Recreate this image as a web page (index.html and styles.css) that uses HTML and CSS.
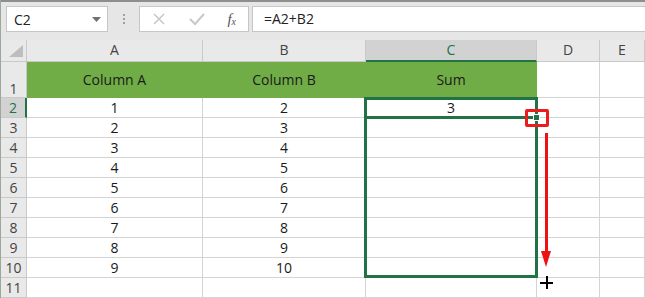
FILE: index.html
```html
<!DOCTYPE html>
<html>
<head>
    <title>Fill Handle</title>
    <link rel="stylesheet" href="styles.css">
</head>
<body>
    <div class="toolbar">
        <div class="namebox">
            <span>C2</span>
            <svg class="dropdown" width="9" height="5" viewBox="0 0 9 5"><path d="M0 0 H9 L4.5 5 Z" fill="#707070"/></svg>
        </div>
        <div class="grip"><i></i><i></i><i></i></div>
        <div class="fbuttons">
            <svg width="14" height="14" viewBox="0 0 14 14"><path d="M2 2 L12 12 M12 2 L2 12" stroke="#c8c8c8" stroke-width="1.6"/></svg>
            <svg width="16" height="14" viewBox="0 0 16 14"><path d="M1 7 L6 12 L15 2" stroke="#c8c8c8" stroke-width="2" fill="none"/></svg>
            <span class="fx">f<sub>x</sub></span>
        </div>
        <div class="formula">=A2+B2</div>
    </div>

    <div class="sheet">
        <div class="corner"><svg width="14" height="12" viewBox="0 0 14 12"><path d="M14 0 V12 H0 Z" fill="#bdbdbd"/></svg></div>
        <div class="colhead">A</div>
        <div class="colhead">B</div>
        <div class="colhead sel">C</div>
        <div class="colhead">D</div>
        <div class="colhead">E</div>

        <div class="rowhead tall">1</div>
        <div class="cell title">Column A</div>
        <div class="cell title">Column B</div>
        <div class="cell title last">Sum</div>
        <div class="cell"></div>
        <div class="cell"></div>

        <div class="rowhead sel">2</div><div class="cell">1</div><div class="cell">2</div><div class="cell">3</div><div class="cell"></div><div class="cell"></div>
        <div class="rowhead">3</div><div class="cell">2</div><div class="cell">3</div><div class="cell"></div><div class="cell"></div><div class="cell"></div>
        <div class="rowhead">4</div><div class="cell">3</div><div class="cell">4</div><div class="cell"></div><div class="cell"></div><div class="cell"></div>
        <div class="rowhead">5</div><div class="cell">4</div><div class="cell">5</div><div class="cell"></div><div class="cell"></div><div class="cell"></div>
        <div class="rowhead">6</div><div class="cell">5</div><div class="cell">6</div><div class="cell"></div><div class="cell"></div><div class="cell"></div>
        <div class="rowhead">7</div><div class="cell">6</div><div class="cell">7</div><div class="cell"></div><div class="cell"></div><div class="cell"></div>
        <div class="rowhead">8</div><div class="cell">7</div><div class="cell">8</div><div class="cell"></div><div class="cell"></div><div class="cell"></div>
        <div class="rowhead">9</div><div class="cell">8</div><div class="cell">9</div><div class="cell"></div><div class="cell"></div><div class="cell"></div>
        <div class="rowhead">10</div><div class="cell">9</div><div class="cell">10</div><div class="cell"></div><div class="cell"></div><div class="cell"></div>
        <div class="rowhead">11</div><div class="cell"></div><div class="cell"></div><div class="cell"></div><div class="cell"></div><div class="cell"></div>

        <!-- selection and annotation overlays -->
        <div class="selection"></div>
        <div class="activeline"></div>
        <div class="handle"></div>
        <div class="redbox"></div>
        <div class="arrow"></div>
        <div class="plus"></div>
    </div>
</body>
</html>
```

FILE: styles.css
```css
* {
    margin: 0;
    padding: 0;
    box-sizing: border-box;
}
body {
    width: 645px;
    height: 298px;
    overflow: hidden;
    font-family: "Open Sans", "Noto Sans", sans-serif;
    background: #fff;
    border-left: 1px solid #9aa89e;
}
.toolbar {
    height: 40px;
    background: #e6e6e6;
    border-top: 2px solid #8e8e8e;
    display: flex;
    align-items: flex-start;
    padding-top: 4px;
    padding-left: 5px;
}
.namebox {
    width: 102px;
    height: 26px;
    background: #fff;
    border: 1px solid #c6c6c6;
    display: flex;
    align-items: center;
    justify-content: space-between;
    padding: 0 6px 0 7px;
    font-size: 14px;
    color: #222;
}
.grip {
    width: 31px;
    height: 26px;
    display: flex;
    flex-direction: column;
    align-items: center;
    justify-content: center;
    gap: 2px;
}
.grip i {
    width: 2px;
    height: 2px;
    background: #a0a0a0;
}
.fbuttons {
    width: 110px;
    height: 26px;
    background: #fff;
    border: 1px solid #c6c6c6;
    display: flex;
    align-items: center;
    justify-content: space-between;
    padding: 0 12px 0 12px;
}
.fx {
    font-family: "Liberation Serif", serif;
    font-style: italic;
    font-size: 15px;
    color: #555;
    line-height: 1;
}
.fx sub {
    font-size: 10px;
    vertical-align: -1px;
}
.formula {
    flex: 1;
    height: 26px;
    margin-left: 3px;
    background: #fff;
    border: 1px solid #c6c6c6;
    border-right: none;
    font-size: 14px;
    color: #222;
    padding-left: 11px;
    line-height: 24px;
}
.sheet {
    position: relative;
    display: grid;
    grid-template-columns: 26px 176px 163px 171px 63px 1fr;
    grid-template-rows: 22px 36px repeat(10, 20px);
    font-size: 14px;
    color: #1a1a1a;
    border-bottom: 2px solid #9d9d9d;
}
.corner,
.colhead,
.rowhead {
    background: #e9e9e9;
    border-right: 1px solid #c9c9c9;
    border-bottom: 1px solid #c9c9c9;
    color: #444;
}
.corner {
    display: flex;
    align-items: flex-end;
    justify-content: flex-end;
    padding: 0 3px 4px 0;
}
.colhead {
    text-align: center;
    line-height: 20px;
}
.colhead.sel {
    background: #d2d2d2;
    color: #217346;
    border-bottom: 2px solid #217346;
}
.rowhead {
    text-align: center;
    line-height: 19px;
    font-size: 14px;
}
.rowhead.tall {
    line-height: 54px;
}
.rowhead.sel {
    background: #d2d2d2;
    color: #217346;
    border-right: 2px solid #217346;
}
.cell {
    border-right: 1px solid #d4d4d4;
    border-bottom: 1px solid #d4d4d4;
    text-align: center;
    line-height: 19px;
}
.cell.title {
    background: #70ad47;
    border-color: #70ad47;
    line-height: 35px;
}
.selection {
    position: absolute;
    left: 363px;
    top: 57px;
    width: 174px;
    height: 181px;
    border: 3px solid #217346;
}
.activeline {
    position: absolute;
    left: 363px;
    top: 76px;
    width: 173px;
    height: 3px;
    background: #217346;
}
.handle {
    position: absolute;
    left: 532px;
    top: 74px;
    width: 7px;
    height: 7px;
    background: #217346;
    border: 1px solid #fff;
}
.redbox {
    position: absolute;
    left: 524px;
    top: 69px;
    width: 24px;
    height: 18px;
    border: 3px solid #ec1c1c;
    border-radius: 2px;
}
.arrow {
    position: absolute;
    left: 544px;
    top: 93px;
    width: 3px;
    height: 122px;
    background: #ee1111;
}
.arrow::after {
    content: "";
    position: absolute;
    left: -4px;
    top: 118px;
    border-left: 5.5px solid transparent;
    border-right: 5.5px solid transparent;
    border-top: 16px solid #ee1111;
}
.plus {
    position: absolute;
    left: 539px;
    top: 236px;
    width: 13px;
    height: 13px;
    background:
        linear-gradient(#000, #000) center / 2px 13px no-repeat,
        linear-gradient(#000, #000) center / 13px 2px no-repeat;
}
```
